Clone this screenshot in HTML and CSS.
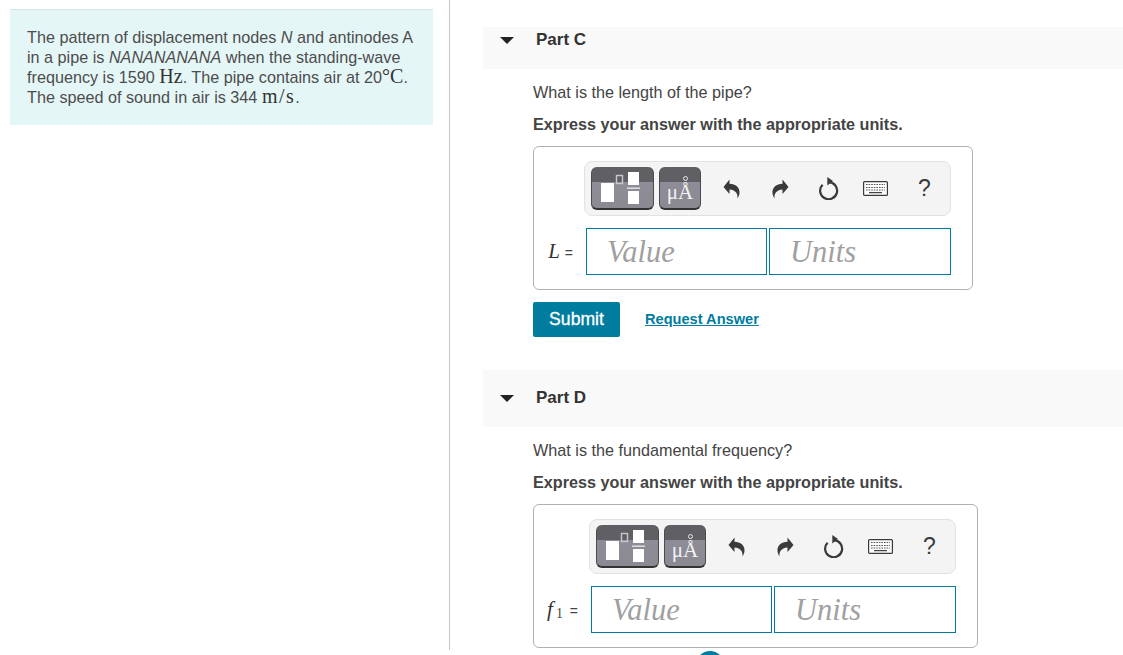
FILE: index.html
```html
<!DOCTYPE html>
<html lang="en">
<head>
    <meta charset="UTF-8">
    <title>Standing waves in a pipe</title>
    <link rel="stylesheet" href="styles.css">
</head>
<body>
    <svg class="icon-defs" width="0" height="0">
        <defs>
            <symbol id="undo" viewBox="0 0 17 20">
                <path d="M0.5 8 L6.5 0.5 V4.8 C12.5 5 17 8.5 16.5 14 C16.3 16 15.5 18 14.5 19.5 C15 15 13 11 6.5 10.5 V15 Z"/>
            </symbol>
            <symbol id="templates" viewBox="0 0 63 43">
                <rect x="10" y="16" width="13" height="19" fill="#fff"/>
                <rect x="25.5" y="8.5" width="6" height="8" fill="none" stroke="#c8c8cc" stroke-width="1.4"/>
                <rect x="37" y="5" width="11" height="13" fill="#fff"/>
                <rect x="36" y="20.5" width="13" height="1.4" fill="#e4e4e8"/>
                <rect x="37" y="24" width="11" height="13" fill="#fff"/>
            </symbol>
            <symbol id="reset" viewBox="0 0 21 23">
                <path d="M10.6 5.2 A8.5 8.5 0 1 1 4.6 7.7" fill="none" stroke="#3a3a3a" stroke-width="2.2"/>
                <path d="M9.3 0 L15 4 L9.3 8.5 Z" fill="#3a3a3a"/>
            </symbol>
            <symbol id="keyboard" viewBox="0 0 25 15">
                <rect x="0.6" y="0.6" width="23.8" height="13.8" rx="1" fill="#fff" stroke="#3a3a3a" stroke-width="1.2"/>
                <path d="M3 3.5 H22 M3 6.5 H22 M3 9 H22" stroke="#555" stroke-width="1.2" stroke-dasharray="1.6 1"/>
                <path d="M6 11.6 H19" stroke="#444" stroke-width="1.3"/>
            </symbol>
        </defs>
    </svg>

    <div class="page">
        <aside class="intro-col">
            <div class="intro-box">
                The pattern of displacement nodes <i>N</i> and antinodes A in a pipe is <i>NANANANANA</i> when the standing-wave frequency is 1590 <span class="math">Hz</span>. The pipe contains air at 20<span class="math">°C</span>. The speed of sound in air is 344 <span class="math math-wide">m/s</span>.
            </div>
        </aside>

        <main class="parts-col">
            <section class="part part-c">
                <div class="part-head">
                    <span class="caret"></span>
                    <span class="part-title">Part C</span>
                </div>
                <div class="part-body">
                    <p class="question">What is the length of the pipe?</p>
                    <p class="instruction">Express your answer with the appropriate units.</p>
                    <div class="answer-box box-c">
                        <div class="toolbar">
                            <div class="tool-btn tool-wide"><svg width="63" height="43"><use href="#templates"/></svg></div>
                            <div class="tool-btn tool-units"><span class="ring"></span>μÅ</div>
                            <svg class="tool-icon undo" width="17" height="20"><use href="#undo"/></svg>
                            <svg class="tool-icon redo" width="17" height="20"><use href="#undo"/></svg>
                            <svg class="tool-icon reset" width="21" height="23"><use href="#reset"/></svg>
                            <svg class="tool-icon keyboard" width="25" height="15"><use href="#keyboard"/></svg>
                            <span class="tool-help">?</span>
                        </div>
                        <div class="answer-row">
                            <span class="answer-label"><i>L</i> =</span>
                            <div class="field">Value</div>
                            <div class="field">Units</div>
                        </div>
                    </div>
                    <div class="actions">
                        <button class="submit-btn" type="button">Submit</button>
                        <a class="answer-link" href="#">Request Answer</a>
                    </div>
                </div>
            </section>

            <section class="part part-d">
                <div class="part-head">
                    <span class="caret"></span>
                    <span class="part-title">Part D</span>
                </div>
                <div class="part-body">
                    <p class="question">What is the fundamental frequency?</p>
                    <p class="instruction">Express your answer with the appropriate units.</p>
                    <div class="answer-box box-d">
                        <div class="toolbar">
                            <div class="tool-btn tool-wide"><svg width="63" height="43"><use href="#templates"/></svg></div>
                            <div class="tool-btn tool-units"><span class="ring"></span>μÅ</div>
                            <svg class="tool-icon undo" width="17" height="20"><use href="#undo"/></svg>
                            <svg class="tool-icon redo" width="17" height="20"><use href="#undo"/></svg>
                            <svg class="tool-icon reset" width="21" height="23"><use href="#reset"/></svg>
                            <svg class="tool-icon keyboard" width="25" height="15"><use href="#keyboard"/></svg>
                            <span class="tool-help">?</span>
                        </div>
                        <div class="answer-row">
                            <span class="answer-label"><i class="f-var">f</i><span class="sub">1</span> =</span>
                            <div class="field">Value</div>
                            <div class="field">Units</div>
                        </div>
                    </div>
                    <div class="round-badge"></div>
                </div>
            </section>
        </main>
    </div>
</body>
</html>
```

FILE: styles.css
```css
html, body {
    margin: 0;
    height: 655px;
    overflow: hidden;
    background-color: #fff;
}
body {
    font-family: "Liberation Sans", Arial, sans-serif;
    font-size: 16.2px;
    color: #444;
}
.icon-defs {
    position: absolute;
}
.page {
    display: flex;
    align-items: flex-start;
}

/* left column */
.intro-col {
    box-sizing: border-box;
    width: 450px;
    height: 650px;
    padding: 9px 16px 0 10px;
    border-right: 1px solid #c4c4c4;
}
.intro-box {
    box-sizing: border-box;
    height: 116px;
    padding: 17px 14px 0 17px;
    background-color: #e5f6f7;
    border-top: 1px solid #d5e4e5;
    line-height: 20px;
    color: #4d4d4d;
}
.math {
    font-family: "Liberation Serif", "Times New Roman", serif;
    font-size: 20px;
    line-height: 0;
    color: #333;
}
.math-wide {
    letter-spacing: 1.5px;
}

/* right column */
.parts-col {
    flex: 1;
    padding: 27px 0 0 33px;
}
.part-head {
    display: flex;
    align-items: flex-start;
    background-color: #f9f9f9;
    padding: 3px 0 0 17px;
    box-sizing: border-box;
}
.part-c .part-head {
    height: 42px;
}
.part-d .part-head {
    height: 57px;
    padding-top: 18px;
}
.caret {
    width: 0;
    height: 0;
    margin-top: 7px;
    border-left: 7px solid transparent;
    border-right: 7px solid transparent;
    border-top: 7px solid #222;
}
.part-title {
    margin-left: 22px;
    font-size: 17px;
    font-weight: bold;
    line-height: 19px;
    color: #333;
}
.part-body {
    padding-left: 50px;
}
.question {
    margin: 14px 0 0;
    line-height: 18px;
}
.instruction {
    margin: 14px 0 0;
    line-height: 18px;
    font-weight: bold;
}

/* answer box */
.answer-box {
    box-sizing: border-box;
    height: 144px;
    margin-top: 13px;
    padding: 14px 21px 0 0;
    border: 1px solid #b0b0b0;
    border-radius: 6px;
    display: flex;
    flex-direction: column;
    align-items: flex-end;
}
.box-c {
    width: 440px;
}
.box-d {
    width: 445px;
}
.toolbar {
    box-sizing: border-box;
    width: 367px;
    height: 55px;
    padding-left: 6px;
    display: flex;
    align-items: center;
    background-color: #f4f4f4;
    border: 1px solid #e2e2e2;
    border-radius: 8px;
}
.tool-btn {
    box-sizing: border-box;
    height: 43px;
    border-radius: 6px;
    border: 1px solid #4c4c50;
    border-top: 0;
    border-bottom: 2px solid #333;
    background: linear-gradient(to bottom, #606064 0, #606064 15px, #8e8d97 15px, #8b8a93 100%);
}
.tool-wide {
    width: 63px;
}
.tool-wide svg {
    display: block;
    margin-left: -1px;
}
.tool-units {
    position: relative;
    width: 42px;
    margin-left: 5px;
    padding-top: 13px;
    text-align: center;
    font-family: "Liberation Serif", "Times New Roman", serif;
    font-size: 21px;
    line-height: 24px;
    color: #f2f2f2;
}
.ring {
    position: absolute;
    top: 9px;
    left: 23px;
    width: 3px;
    height: 3px;
    border: 1px solid #e8e8e8;
    border-radius: 50%;
}
.tool-icon {
    fill: #3a3a3a;
    flex: none;
}
.undo {
    margin-left: 22px;
}
.redo {
    margin-left: 32px;
    transform: scaleX(-1);
}
.reset {
    margin-left: 29px;
}
.keyboard {
    margin-left: 24px;
}
.tool-help {
    margin-left: 30px;
    font-size: 23px;
    color: #3a3a3a;
}
.answer-row {
    width: 365px;
    margin-top: 12px;
    position: relative;
    display: grid;
    grid-template-columns: 181px 182px;
    gap: 2px;
}
.answer-label {
    position: absolute;
    right: 100%;
    top: 12px;
    margin-right: 13px;
    white-space: nowrap;
    font-size: 14px;
    line-height: 22px;
    color: #444;
}
.answer-label i {
    font-family: "Liberation Serif", "Times New Roman", serif;
    font-size: 21px;
    margin-right: 1px;
    color: #333;
}
.answer-label .f-var {
    font-size: 21px;
    margin-right: 3px;
}
.sub {
    font-family: "Liberation Serif", "Times New Roman", serif;
    font-size: 14px;
    vertical-align: -2px;
    margin-right: 3px;
}
.field {
    box-sizing: border-box;
    height: 47px;
    padding-left: 20px;
    border: 1px solid #007c9e;
    font-family: "Liberation Serif", "Times New Roman", serif;
    font-style: italic;
    font-size: 30.5px;
    line-height: 47px;
    color: #a0a0a0;
}
.actions {
    display: flex;
    align-items: center;
    margin-top: 12px;
}
.submit-btn {
    width: 87px;
    height: 35px;
    padding: 0;
    border: none;
    border-radius: 2px;
    background-color: #007c9e;
    color: #fff;
    font-family: inherit;
    font-size: 17.6px;
    -webkit-text-stroke: 0.3px #fff;
}
.answer-link {
    margin: 0 0 1px 25px;
    font-size: 14.6px;
    font-weight: bold;
    color: #007c9e;
}
.part-d {
    margin-top: 33px;
}
.round-badge {
    width: 28px;
    height: 28px;
    margin: 3px 0 0 163px;
    border-radius: 50%;
    background-color: #007c9e;
}
```
